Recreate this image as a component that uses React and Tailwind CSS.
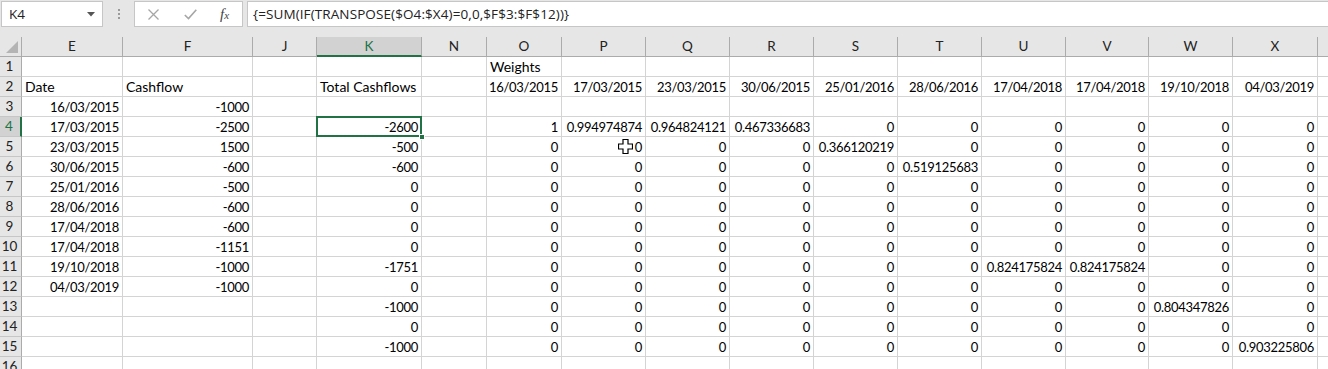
import React from "react";

/* ===== Sheet data ===== */
const columns = [
  { key: "E", w: "w-[101px]" },
  { key: "F", w: "w-[130px]" },
  { key: "J", w: "w-[64px]" },
  { key: "K", w: "w-[105px]" },
  { key: "N", w: "w-[65px]" },
  { key: "O", w: "w-[75px]" },
  { key: "P", w: "w-[84px]" },
  { key: "Q", w: "w-[84px]" },
  { key: "R", w: "w-[84px]" },
  { key: "S", w: "w-[84px]" },
  { key: "T", w: "w-[84px]" },
  { key: "U", w: "w-[84px]" },
  { key: "V", w: "w-[83px]" },
  { key: "W", w: "w-[84px]" },
  { key: "X", w: "w-[85px]" },
];

const dates = [
  "16/03/2015", "17/03/2015", "23/03/2015", "30/06/2015", "25/01/2016",
  "28/06/2016", "17/04/2018", "17/04/2018", "19/10/2018", "04/03/2019",
];
const cashflows = ["-1000", "-2500", "1500", "-600", "-500", "-600", "-600", "-1151", "-1000", "-1000"];
const totals = ["-2600", "-500", "-600", "0", "0", "0", "0", "-1751", "0", "-1000", "0", "-1000"];

// weights for rows 4..15, index = column O..X
const weightOverrides = {
  4: { 0: "1", 1: "0.994974874", 2: "0.964824121", 3: "0.467336683" },
  5: { 4: "0.366120219" },
  6: { 5: "0.519125683" },
  11: { 6: "0.824175824", 7: "0.824175824" },
  13: { 8: "0.804347826" },
  15: { 9: "0.903225806" },
};

const weightCols = ["O", "P", "Q", "R", "S", "T", "U", "V", "W", "X"];

const buildRow = (n) => {
  const cells = {};
  if (n === 1) cells.O = { v: "Weights", left: true };
  if (n === 2) {
    cells.E = { v: "Date", left: true };
    cells.F = { v: "Cashflow", left: true };
    cells.K = { v: "Total Cashflows", left: true };
    weightCols.forEach((c, i) => {
      cells[c] = { v: dates[i] };
    });
  }
  if (n >= 3 && n <= 12) {
    cells.E = { v: dates[n - 3] };
    cells.F = { v: cashflows[n - 3] };
  }
  if (n >= 4 && n <= 15) {
    cells.K = { v: totals[n - 4] };
    weightCols.forEach((c, i) => {
      const ov = weightOverrides[n] || {};
      cells[c] = { v: ov[i] !== undefined ? ov[i] : "0" };
    });
  }
  return cells;
};

const rows = Array.from({ length: 16 }, (_, i) => i + 1);

const cellFont = { fontFamily: "Lato, 'Noto Sans', sans-serif" };

const FormulaBar = () => (
  <div className="h-[37px] bg-[#e6e6e6] flex items-start pt-[1px] pl-[1px]">
    <div className="w-[102px] h-[26px] bg-white border border-[#c6c6c6] flex items-center justify-between pl-[7px] pr-[7px]">
      <span className="text-[13.5px] text-[#222]" style={{ fontFamily: "'Open Sans', sans-serif" }}>K4</span>
      <svg width="8" height="5" viewBox="0 0 8 5">
        <path d="M0 0 L8 0 L4 4.5 Z" fill="#555" />
      </svg>
    </div>
    <div className="w-[31px] h-[26px] flex flex-col items-center justify-center gap-[2px]">
      <span className="w-[2px] h-[2px] bg-[#9a9a9a]" />
      <span className="w-[2px] h-[2px] bg-[#9a9a9a]" />
      <span className="w-[2px] h-[2px] bg-[#9a9a9a]" />
    </div>
    <div className="w-[109px] h-[26px] bg-white border border-[#c6c6c6] flex items-center">
      <svg className="ml-[13px]" width="11" height="11" viewBox="0 0 11 11">
        <path d="M0.5 0.5 L10.5 10.5 M10.5 0.5 L0.5 10.5" stroke="#a6a6a6" strokeWidth="1.3" />
      </svg>
      <svg className="ml-[25px]" width="13" height="11" viewBox="0 0 13 11">
        <path d="M0.8 6 L4.5 9.6 L12.3 0.8" stroke="#a6a6a6" strokeWidth="1.6" fill="none" />
      </svg>
      <span
        className="ml-[23px] text-[15px] italic text-[#444] leading-none"
        style={{ fontFamily: "'Liberation Serif', serif" }}
      >
        f<span className="text-[11px]">x</span>
      </span>
    </div>
    <div className="ml-[4px] flex-1 h-[26px] bg-white border border-[#c6c6c6] border-r-0 flex items-center pl-[5px]">
      <span className="text-[13.5px] text-[#222] tracking-[0.1px]" style={{ fontFamily: "'Open Sans', sans-serif" }}>
        {"{=SUM(IF(TRANSPOSE($O4:$X4)=0,0,$F$3:$F$12))}"}
      </span>
    </div>
  </div>
);

const HeaderRow = () => (
  <div className="flex h-[20px]" style={cellFont}>
    <div className="w-[22px] shrink-0 bg-[#e6e6e6] border-r border-b border-[#ababab] relative">
      <svg className="absolute right-[3px] bottom-[3px]" width="12" height="12" viewBox="0 0 12 12">
        <path d="M12 0 L12 12 L0 12 Z" fill="#b4b4b4" />
      </svg>
    </div>
    {columns.map((c) => {
      const sel = c.key === "K";
      return (
        <div
          key={c.key}
          className={
            sel
              ? `${c.w} shrink-0 bg-[#d2d2d2] border-r border-[#ababab] border-b-2 border-b-[#217346] flex items-center justify-center text-[13.5px] text-[#217346]`
              : `${c.w} shrink-0 bg-[#e6e6e6] border-r border-b border-[#ababab] flex items-center justify-center text-[13.5px] text-[#222]`
          }
        >
          {c.key}
        </div>
      );
    })}
    <div className="flex-1 bg-[#e6e6e6] border-b border-[#ababab]" />
  </div>
);

const SheetRow = ({ n }) => {
  const cells = buildRow(n);
  const sel = n === 4;
  return (
    <div className="flex h-[20px]" style={cellFont}>
      <div
        className={
          sel
            ? "w-[22px] shrink-0 bg-[#d2d2d2] border-r-2 border-r-[#217346] border-b border-b-[#c6c6c6] flex items-center justify-center pr-[2px] text-[13.5px] text-[#217346]"
            : "w-[22px] shrink-0 bg-[#e6e6e6] border-r border-r-[#ababab] border-b border-b-[#c6c6c6] flex items-center justify-center pr-[2px] text-[13.5px] text-[#222]"
        }
      >
        {n}
      </div>
      {columns.map((c) => {
        const cell = cells[c.key];
        const active = sel && c.key === "K";
        return (
          <div
            key={c.key}
            className={`${c.w} shrink-0 border-r border-b border-[#d4d4d4] flex items-end pb-[1px] px-[2px] text-black leading-[16px] whitespace-nowrap relative ${
              cell && cell.left
                ? "justify-start text-[14px]"
                : "justify-end text-[13px] tracking-[-0.3px]"
            }`}
          >
            {cell && <span className={cell.left ? "relative z-10 pl-[1px]" : "pr-[1px]"}>{cell.v}</span>}
            {active && (
              <>
                <div className="absolute -left-[1px] -top-[1px] right-[-1px] bottom-[-1px] border-2 border-[#217346] pointer-events-none" />
                <div className="absolute right-[-4px] bottom-[-4px] w-[6px] h-[6px] bg-[#217346] border border-white z-20" />
              </>
            )}
          </div>
        );
      })}
      <div className="flex-1 border-b border-[#d4d4d4]" />
    </div>
  );
};

export default function App() {
  return (
    <div className="w-[1328px] h-[369px] overflow-hidden bg-white relative">
      <FormulaBar />
      <HeaderRow />
      {rows.map((n) => (
        <SheetRow key={n} n={n} />
      ))}
      {/* Excel cell cursor hovering over P5 */}
      <svg className="absolute left-[618px] top-[139px]" width="15" height="15" viewBox="0 0 15 15">
        <path
          d="M5 0.5 H10 V5 H14.5 V10 H10 V14.5 H5 V10 H0.5 V5 H5 Z"
          fill="white"
          stroke="black"
          strokeWidth="1.2"
        />
      </svg>
    </div>
  );
}
